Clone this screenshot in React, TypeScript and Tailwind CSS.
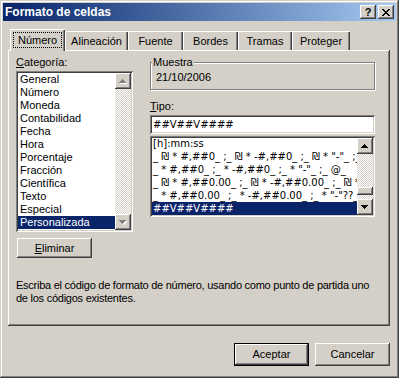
import React from "react";

const RAISED =
  "shadow-[inset_-1px_-1px_#404040,inset_1px_1px_#ffffff,inset_-2px_-2px_#808080,inset_2px_2px_#d4d0c8]";
const SUNKEN =
  "shadow-[inset_1px_1px_#808080,inset_-1px_-1px_#ffffff,inset_2px_2px_#404040,inset_-2px_-2px_#d4d0c8]";
const CHECK =
  "bg-[image:repeating-conic-gradient(#d4d0c8_0%_25%,#ffffff_0%_50%)] bg-[length:2px_2px]";

function Arrow({ up, disabled }: { up: boolean; disabled?: boolean }) {
  const rows = up
    ? [
        [3, 0, 1],
        [2, 1, 3],
        [1, 2, 5],
        [0, 3, 7],
      ]
    : [
        [0, 0, 7],
        [1, 1, 5],
        [2, 2, 3],
        [3, 3, 1],
      ];
  return (
    <svg width="8" height="5" viewBox="0 0 8 5" shapeRendering="crispEdges">
      {disabled &&
        rows.map(([x, y, w], i) => (
          <rect key={"s" + i} x={x + 1} y={y + 1} width={w} height={1} fill="#ffffff" />
        ))}
      {rows.map(([x, y, w], i) => (
        <rect key={i} x={x} y={y} width={w} height={1} fill={disabled ? "#808080" : "#000000"} />
      ))}
    </svg>
  );
}

function ScrollButton({ up, disabled }: { up: boolean; disabled?: boolean }) {
  return (
    <div className={`w-[16px] h-[16px] shrink-0 bg-[#d4d0c8] ${RAISED} flex items-center justify-center`}>
      <Arrow up={up} disabled={disabled} />
    </div>
  );
}

function CloseGlyph() {
  const r = [];
  for (let i = 0; i < 7; i++) {
    r.push(<rect key={"a" + i} x={i} y={i} width={2} height={1} fill="#000" />);
    r.push(<rect key={"b" + i} x={6 - i} y={i} width={2} height={1} fill="#000" />);
  }
  return (
    <svg width="8" height="7" viewBox="0 0 8 7" shapeRendering="crispEdges">
      {r}
    </svg>
  );
}

const categories = [
  "General",
  "Número",
  "Moneda",
  "Contabilidad",
  "Fecha",
  "Hora",
  "Porcentaje",
  "Fracción",
  "Científica",
  "Texto",
  "Especial",
  "Personalizada",
];

const formats = [
  "[h]:mm:ss",
  '_ ₪ * #,##0_ ;_ ₪ * -#,##0_ ;_ ₪ * "-"_ ;_ @_ ',
  '_ * #,##0_ ;_ * -#,##0_ ;_ * "-"_ ;_ @_ ',
  '_ ₪ * #,##0.00_ ;_ ₪ * -#,##0.00_ ;_ ₪ * "-"??_ ;_ @_ ',
  '_ * #,##0.00_ ;_ * -#,##0.00_ ;_ * "-"??_ ;_ @_ ',
  "##V##V####",
];

const tabs: { label: string; w: string }[] = [
  { label: "Alineación", w: "w-[63px]" },
  { label: "Fuente", w: "w-[55px]" },
  { label: "Bordes", w: "w-[55px]" },
  { label: "Tramas", w: "w-[54px]" },
  { label: "Proteger", w: "w-[58px]" },
];

const CODE_FONT = "font-['DejaVu_Sans','Liberation_Sans',sans-serif] text-[10px]";

export default function App() {
  return (
    <div
      className={`w-[399px] h-[378px] bg-[#d4d0c8] p-[3px] flex flex-col text-[11px] leading-[13px] text-black font-['Tahoma','Liberation_Sans',sans-serif] shadow-[inset_-1px_-1px_#404040,inset_1px_1px_#d4d0c8,inset_-2px_-2px_#808080,inset_2px_2px_#ffffff]`}
    >
      {/* Title bar */}
      <div className="h-[18px] shrink-0 flex items-center justify-between bg-linear-to-r from-[#0a246a] to-[#a6caf0]">
        <span className="pl-[2px] font-bold text-white text-[12px]">Formato de celdas</span>
        <div className="flex gap-[2px] mr-[2px]">
          <div className={`w-[16px] h-[14px] bg-[#d4d0c8] ${RAISED} flex items-center justify-center font-bold text-[11px] leading-none pt-[1px]`}>
            ?
          </div>
          <div className={`w-[16px] h-[14px] bg-[#d4d0c8] ${RAISED} flex items-center justify-center`}>
            <CloseGlyph />
          </div>
        </div>
      </div>

      <div className="pl-[5px] pr-[6px] pt-[8px]">
        {/* Tabs */}
        <div className="flex items-end h-[21px] pl-[2px]">
          <div className="relative z-10 -mb-[1px] w-[55px] h-[22px] bg-[#d4d0c8] p-[3px] shadow-[inset_1px_1px_#ffffff,inset_-1px_0_#404040,inset_-2px_0_#808080]">
            <div className="h-[16px] border border-dotted border-black flex items-center justify-center pt-[1px]">
              Número
            </div>
          </div>
          {tabs.map((t) => (
            <div
              key={t.label}
              className={`${t.w} h-[19px] bg-[#d4d0c8] flex justify-center pt-[4px] shadow-[inset_1px_1px_#ffffff,inset_-1px_0_#404040,inset_-2px_0_#808080]`}
            >
              {t.label}
            </div>
          ))}
        </div>

        {/* Panel */}
        <div className="h-[276px] bg-[#d4d0c8] pl-[8px] pt-[6px] shadow-[inset_-1px_-1px_#404040,inset_1px_1px_#ffffff,inset_-2px_-2px_#808080]">
          <div className="flex gap-[17px]">
            {/* Left column */}
            <div className="w-[117px] flex flex-col">
              <div>
                <span className="underline">C</span>ategoría:
              </div>
              <div className={`mt-[2px] h-[161px] bg-white p-[2px] flex ${SUNKEN}`}>
                <div className="flex-1 flex flex-col overflow-hidden">
                  {categories.map((c) => (
                    <div
                      key={c}
                      className={`h-[13px] pl-[2px] whitespace-nowrap ${c === "Personalizada" ? "bg-[#0a246a] text-white" : ""}`}
                    >
                      {c}
                    </div>
                  ))}
                </div>
                <div className="w-[16px] flex flex-col">
                  <ScrollButton up disabled />
                  <div className={`flex-1 ${CHECK}`} />
                  <ScrollButton up={false} disabled />
                </div>
              </div>
              <div
                className={`mt-[6px] ml-[1px] w-[75px] h-[20px] bg-[#d4d0c8] ${RAISED} flex items-center justify-center`}
              >
                <span>
                  <span className="underline">E</span>liminar
                </span>
              </div>
            </div>

            {/* Right column */}
            <div className="w-[225px] flex flex-col">
              <div className="relative mt-[6px] h-[28px] border border-[#808080] shadow-[1px_1px_#ffffff,inset_1px_1px_#ffffff] pl-[5px] pt-[8px]">
                <span className="absolute -top-[7px] left-[1px] bg-[#d4d0c8] px-[1px]">Muestra</span>
                21/10/2006
              </div>
              <div className="mt-[10px]">
                <span className="underline">T</span>ipo:
              </div>
              <div className={`mt-[2px] h-[19px] bg-white pl-[3px] pt-[3px] ${SUNKEN} ${CODE_FONT}`}>##V##V####</div>
              <div className={`mt-[2px] h-[81px] bg-white p-[2px] flex ${SUNKEN}`}>
                <div className={`flex-1 min-w-0 flex flex-col justify-end overflow-hidden ${CODE_FONT}`}>
                  {formats.map((f, i) => (
                    <div
                      key={i}
                      className={`h-[13px] shrink-0 pl-[1px] whitespace-pre overflow-hidden ${i === formats.length - 1 ? "bg-[#0a246a] text-white" : ""}`}
                    >
                      {f}
                    </div>
                  ))}
                </div>
                <div className="w-[16px] flex flex-col">
                  <ScrollButton up />
                  <div className={`flex-1 flex flex-col justify-end pb-[4px] ${CHECK}`}>
                    <div className={`h-[8px] bg-[#d4d0c8] ${RAISED}`} />
                  </div>
                  <ScrollButton up={false} />
                </div>
              </div>
            </div>
          </div>
          <p className="mt-[21px] whitespace-nowrap tracking-[-0.25px]">
            Escriba el código de formato de número, usando como punto de partida uno
            <br />
            de los códigos existentes.
          </p>
        </div>

        {/* Bottom buttons */}
        <div className="flex justify-end gap-[6px] mt-[17px]">
          <div className="w-[75px] h-[23px] border border-black">
            <div className={`w-full h-full bg-[#d4d0c8] ${RAISED} flex items-center justify-center`}>Aceptar</div>
          </div>
          <div className={`w-[75px] h-[23px] bg-[#d4d0c8] ${RAISED} flex items-center justify-center`}>Cancelar</div>
        </div>
      </div>
    </div>
  );
}
